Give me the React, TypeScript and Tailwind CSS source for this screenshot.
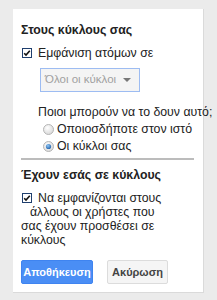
import React from "react";

function Check() {
  return (
    <svg width="10" height="10" viewBox="0 0 10 10" className="shrink-0">
      <rect x="0.5" y="0.5" width="9" height="9" fill="#fff" stroke="#1f3f6e" />
      <path d="M2.2 5.2 L4 7 L7.8 2.8" fill="none" stroke="#111" strokeWidth="1.6" />
    </svg>
  );
}

function Radio({ on }: { on?: boolean }) {
  return (
    <svg width="11" height="11" viewBox="0 0 11 11" className="shrink-0">
      <defs>
        <radialGradient id="rg" cx="0.4" cy="0.35" r="0.7">
          <stop offset="0" stopColor="#ffffff" />
          <stop offset="1" stopColor="#d6d6d6" />
        </radialGradient>
        <radialGradient id="bd" cx="0.4" cy="0.35" r="0.7">
          <stop offset="0" stopColor="#8fc6f5" />
          <stop offset="1" stopColor="#1f5fa8" />
        </radialGradient>
      </defs>
      <circle cx="5.5" cy="5.5" r="5" fill="url(#rg)" stroke="#b5b5b5" />
      {on && <circle cx="5.5" cy="5.5" r="2.6" fill="url(#bd)" />}
    </svg>
  );
}

export default function App() {
  return (
    <div
      className="w-[217px] h-[300px] bg-[#ebebeb] pt-[9px] pl-[13px] text-[12.3px] text-[#222] whitespace-nowrap"
      style={{ fontFamily: '"Liberation Sans", Arial, sans-serif' }}
    >
      <div className="w-[191px] h-[284px] bg-white border-r border-b border-[#dadada] pt-[13px] px-[8px]">
        <div className="font-bold leading-[16px]">Στους κύκλους σας</div>
        <div className="mt-[7px] flex items-center h-[16px] pl-[1px]">
          <Check />
          <span className="ml-[6px]">Εμφάνιση ατόμων σε</span>
        </div>
        <div className="mt-[7px] ml-[19px] w-[100px] h-[24px] border border-[#9dbcf2] bg-[#f4f4f4] flex items-center pl-[4px] text-[11.5px] text-[#a0a0a0]">
          <span>Όλοι οι κύκλοι</span>
          <svg width="8" height="4" viewBox="0 0 8 4" className="ml-auto mr-[8px]">
            <path d="M0 0 L8 0 L4 4 Z" fill="#777" />
          </svg>
        </div>
        <div className="mt-[12px] ml-[17px] leading-[16px]">Ποιοι μπορούν να το δουν αυτό;</div>
        <div className="mt-[1px] ml-[22px] flex items-center h-[17px]">
          <Radio />
          <span className="ml-[3px]">Οποιοσδήποτε στον ιστό</span>
        </div>
        <div className="mt-[0px] ml-[22px] flex items-center h-[17px]">
          <Radio on />
          <span className="ml-[3px]">Οι κύκλοι σας</span>
        </div>
        <div className="mt-[3px] h-[2px] bg-[#bcbcbc] mr-[1px]" />
        <div className="mt-[7px] font-bold leading-[16px]">Έχουν εσάς σε κύκλους</div>
        <div className="mt-[8px] leading-[14px]">
          <div className="flex items-center pl-[1px]">
            <Check />
            <span className="ml-[6px]">Να εμφανίζονται στους</span>
          </div>
          <div className="pl-[9px]">άλλους οι χρήστες που</div>
          <div>σας έχουν προσθέσει σε</div>
          <div>κύκλους</div>
        </div>
        <div className="mt-[13px] flex gap-[14px]">
          <button className="h-[24px] w-[72px] rounded-[2px] border border-[#3f84f0] bg-[#4a8ef5] text-white font-bold text-[11px]">
            Αποθήκευση
          </button>
          <button className="h-[24px] w-[61px] rounded-[2px] border border-[#dcdcdc] bg-[#f5f5f5] text-[#444] font-bold text-[11px]">
            Ακύρωση
          </button>
        </div>
      </div>
    </div>
  );
}
